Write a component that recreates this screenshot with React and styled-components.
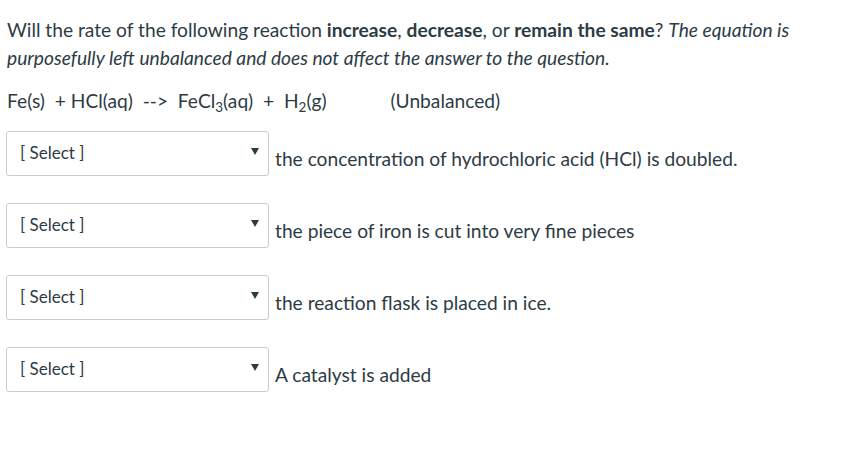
import React from "react";
import styled, { createGlobalStyle } from "styled-components";

const Global = createGlobalStyle`
  html, body { margin: 0; padding: 0; background: #fff; }
  body { font-family: Lato, "Open Sans", sans-serif; color: #2d3b45; }
`;

const Page = styled.div`
  padding: 16px 0 0 7px;
  width: 853px;
`;

const Question = styled.p`
  margin: 0;
  font-size: 19.2px;
  line-height: 28px;
  b { font-weight: 700; }
  i { font-style: italic; }
`;

const Equation = styled.p`
  margin: 15px 0 0 0;
  font-size: 19.2px;
  line-height: 28px;
  white-space: pre;
  sub { font-size: 13.5px; vertical-align: -4px; line-height: 0; }
`;

const Rows = styled.div`
  display: flex;
  flex-direction: column;
  gap: 27px;
  margin-top: 16px;
`;

const Row = styled.div`
  display: flex;
  align-items: flex-end;
`;

const SelectBox = styled.div`
  box-sizing: border-box;
  width: 263px;
  height: 45px;
  margin-left: -1px;
  border: 1px solid #c7cdd1;
  border-radius: 3px;
  background: #fff;
  display: flex;
  align-items: center;
  justify-content: space-between;
  padding: 0 9px 2px 13px;
  font-size: 17px;
  color: #2d3b45;
`;

const Arrow = styled.span`
  width: 0;
  height: 0;
  border-left: 4px solid transparent;
  border-right: 4px solid transparent;
  border-top: 7px solid #2d3b45;
  margin-bottom: 2px;
`;

const Label = styled.span`
  font-size: 19.2px;
  line-height: 28px;
  margin-left: 6px;
  padding-bottom: 3px;
`;

const items = [
  "the concentration of hydrochloric acid (HCl) is doubled.",
  "the piece of iron is cut into very fine pieces",
  "the reaction flask is placed in ice.",
  "A catalyst is added",
];

export default function App() {
  return (
    <Page>
      <Global />
      <Question>
        Will the rate of the following reaction <b>increase</b>, <b>decrease</b>, or{" "}
        <b>remain the same</b>? <i>The equation is purposefully left unbalanced and does not affect the answer to the question.</i>
      </Question>
      <Equation>
        Fe(s)  + HCl(aq)  {"-->"}  FeCl<sub>3</sub>(aq)  +  H<sub>2</sub>(g)             (Unbalanced)
      </Equation>
      <Rows>
        {items.map((t) => (
          <Row key={t}>
            <SelectBox>
              <span>[ Select ]</span>
              <Arrow />
            </SelectBox>
            <Label>{t}</Label>
          </Row>
        ))}
      </Rows>
    </Page>
  );
}
